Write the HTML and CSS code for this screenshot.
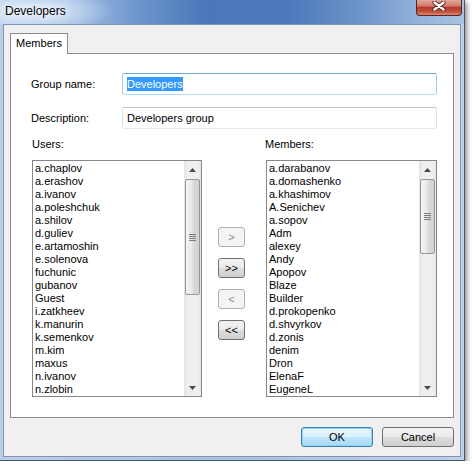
FILE: index.html
```html
<!DOCTYPE html>
<html lang="en">
<head>
    <meta charset="UTF-8">
    <title>Developers</title>
    <link rel="stylesheet" href="styles.css">
</head>
<body>
    <div class="window">
        <div class="titlebar">
            <span class="title">Developers</span>
            <div class="close">
                <svg width="14" height="10" viewBox="0 0 14 10">
                    <path d="M2.5 1.5 L11.5 8.5 M11.5 1.5 L2.5 8.5" stroke="#5a1f17" stroke-width="4.2" stroke-linecap="round"/>
                    <path d="M2.5 1.5 L11.5 8.5 M11.5 1.5 L2.5 8.5" stroke="#ffffff" stroke-width="2.4" stroke-linecap="round"/>
                </svg>
            </div>
        </div>
        <div class="client">
            <div class="tabs">
                <div class="tab">Members</div>
            </div>
            <div class="panel">
                <div class="field">
                    <span class="field-label">Group name:</span>
                    <div class="textbox focused"><span class="sel">Developers</span></div>
                </div>
                <div class="field">
                    <span class="field-label">Description:</span>
                    <div class="textbox">Developers group</div>
                </div>

                <div class="lists">
                    <div class="list-col users">
                        <div class="list-label">Users:</div>
                        <div class="listbox">
                            <div class="items">
                                <div>a.chaplov</div>
                                <div>a.erashov</div>
                                <div>a.ivanov</div>
                                <div>a.poleshchuk</div>
                                <div>a.shilov</div>
                                <div>d.guliev</div>
                                <div>e.artamoshin</div>
                                <div>e.solenova</div>
                                <div>fuchunic</div>
                                <div>gubanov</div>
                                <div>Guest</div>
                                <div>i.zatkheev</div>
                                <div>k.manurin</div>
                                <div>k.semenkov</div>
                                <div>m.kim</div>
                                <div>maxus</div>
                                <div>n.ivanov</div>
                                <div>n.zlobin</div>
                            </div>
                            <div class="scrollbar">
                                <div class="arrow">
                                    <svg width="7" height="4" viewBox="0 0 7 4"><path d="M3.5 0 L7 4 L0 4 Z" fill="#4a4a4a"/></svg>
                                </div>
                                <div class="track">
                                    <div class="thumb">
                                        <svg width="7" height="7" viewBox="0 0 7 7"><path d="M0 0.5 H7 M0 2.5 H7 M0 4.5 H7 M0 6.5 H7" stroke="#7d7d7d"/></svg>
                                    </div>
                                </div>
                                <div class="arrow">
                                    <svg width="7" height="4" viewBox="0 0 7 4"><path d="M0 0 L7 0 L3.5 4 Z" fill="#4a4a4a"/></svg>
                                </div>
                            </div>
                        </div>
                    </div>

                    <div class="move-buttons">
                        <button class="move" disabled>&gt;</button>
                        <button class="move">&gt;&gt;</button>
                        <button class="move" disabled>&lt;</button>
                        <button class="move">&lt;&lt;</button>
                    </div>

                    <div class="list-col members">
                        <div class="list-label">Members:</div>
                        <div class="listbox">
                            <div class="items">
                                <div>a.darabanov</div>
                                <div>a.domashenko</div>
                                <div>a.khashimov</div>
                                <div>A.Senichev</div>
                                <div>a.sopov</div>
                                <div>Adm</div>
                                <div>alexey</div>
                                <div>Andy</div>
                                <div>Apopov</div>
                                <div>Blaze</div>
                                <div>Builder</div>
                                <div>d.prokopenko</div>
                                <div>d.shvyrkov</div>
                                <div>d.zonis</div>
                                <div>denim</div>
                                <div>Dron</div>
                                <div>ElenaF</div>
                                <div>EugeneL</div>
                            </div>
                            <div class="scrollbar">
                                <div class="arrow">
                                    <svg width="7" height="4" viewBox="0 0 7 4"><path d="M3.5 0 L7 4 L0 4 Z" fill="#4a4a4a"/></svg>
                                </div>
                                <div class="track">
                                    <div class="thumb">
                                        <svg width="7" height="7" viewBox="0 0 7 7"><path d="M0 0.5 H7 M0 2.5 H7 M0 4.5 H7 M0 6.5 H7" stroke="#7d7d7d"/></svg>
                                    </div>
                                </div>
                                <div class="arrow">
                                    <svg width="7" height="4" viewBox="0 0 7 4"><path d="M0 0 L7 0 L3.5 4 Z" fill="#4a4a4a"/></svg>
                                </div>
                            </div>
                        </div>
                    </div>
                </div>
            </div>

            <div class="footer">
                <button class="btn default">OK</button>
                <button class="btn">Cancel</button>
            </div>
        </div>
    </div>
</body>
</html>
```

FILE: styles.css
```css
body {
    margin: 0;
    background: #fff;
    font-family: "Liberation Sans", Arial, sans-serif;
    font-size: 11px;
    color: #000;
}

/* window frame */
.window {
    width: 465px;
    box-sizing: border-box;
    background: linear-gradient(90deg, #b9cee8, #a9c2e2 50%, #bed2ea);
    border-right: 1px solid #45566f;
    border-bottom: 1px solid #45566f;
    box-shadow: 2px 2px 5px rgba(0, 0, 0, 0.45);
}

.titlebar {
    height: 24px;
    display: flex;
    justify-content: space-between;
    align-items: flex-start;
    padding-right: 2px;
    background:
        radial-gradient(ellipse 80px 20px at 34px 11px, rgba(235, 243, 252, 0.85), rgba(235, 243, 252, 0) 100%),
        linear-gradient(90deg, #bcd3ee 0, #a9c4e7 14%, #6d95cb 30%, #4b78b9 44%, #4c79ba 62%, #6e95ca 78%, #93b1da 90%, #a9c3e3 100%);
}

.title {
    padding-left: 5px;
    font-size: 12px;
    line-height: 22px;
    color: #000;
    text-shadow: 0 0 6px #fff, 0 0 10px #fff;
}

.close {
    width: 46px;
    height: 16px;
    box-sizing: border-box;
    padding-top: 1px;
    border: 1px solid #5e251d;
    border-top: none;
    border-radius: 0 0 4px 4px;
    background: linear-gradient(#e3a89d 0, #d17a6a 40%, #b73a2b 50%, #c0503d 78%, #d98c72 100%);
    display: flex;
    align-items: flex-start;
    justify-content: center;
}

.client {
    margin: 0 3px 3px;
    padding: 8px 6px 9px;
    background: #f0f0f0;
    border: 1px solid #8094b2;
}

/* tab control */
.tabs {
    display: flex;
}

.tab {
    position: relative;
    width: 58px;
    height: 21px;
    box-sizing: border-box;
    margin-bottom: -1px;
    border: 1px solid #898c95;
    border-bottom: none;
    background: #fff;
    text-align: center;
    line-height: 19px;
}

.panel {
    height: 365px;
    box-sizing: border-box;
    padding: 19px 16px 0 20px;
    border: 1px solid #898c95;
    background: #fff;
}

.field {
    display: flex;
    align-items: center;
    height: 22px;
}

.field + .field {
    margin-top: 12px;
}

.field-label {
    width: 91px;
}

.textbox {
    flex: 1;
    height: 22px;
    box-sizing: border-box;
    padding: 0 4px;
    border: 1px solid;
    border-color: #c4c6cb #dde1e7 #e3e9ef #dde1e7;
    border-radius: 2px;
    line-height: 20px;
}

.textbox.focused {
    border-color: #6ea6da #a4c9e3 #b7d9ed #a4c9e3;
}

.sel {
    display: inline-block;
    line-height: 14px;
    background: #3399ff;
    color: #fff;
}

/* user lists */
.lists {
    display: flex;
    margin-top: 9px;
    margin-left: 1px;
}

.users {
    width: 170px;
}

.members {
    width: 171px;
    margin-left: 21px;
}

.list-label {
    height: 13px;
    line-height: 13px;
    margin-bottom: 9px;
}

.members .list-label {
    margin-left: -1px;
}

.listbox {
    height: 237px;
    box-sizing: border-box;
    display: flex;
    border: 1px solid #828790;
}

.items {
    flex: 1;
    overflow: hidden;
    padding: 1px 0 0 2px;
}

.items div {
    line-height: 13px;
    white-space: nowrap;
}

.scrollbar {
    width: 17px;
    display: flex;
    flex-direction: column;
    background: linear-gradient(90deg, #e3e3e3, #eeeeee 20%, #f0f0f0 80%, #e6e6e6);
}

.arrow {
    height: 17px;
    display: flex;
    align-items: center;
    justify-content: center;
}

.track {
    flex: 1;
}

.thumb {
    margin: 1px 1px 0;
    box-sizing: border-box;
    border: 1px solid #979797;
    border-radius: 2px;
    background: linear-gradient(90deg, #f4f4f4, #e9e9e9 45%, #dadada 55%, #d2d2d2);
    display: flex;
    align-items: center;
    justify-content: center;
}

.users .thumb {
    height: 116px;
}

.members .thumb {
    height: 75px;
}

/* buttons */
.move-buttons {
    display: flex;
    flex-direction: column;
    gap: 11px;
    width: 27px;
    margin-left: 16px;
    padding-top: 89px;
}

.move,
.btn {
    height: 20px;
    box-sizing: border-box;
    padding: 0;
    border: 1px solid #707070;
    border-radius: 3px;
    background: linear-gradient(#f2f2f2 0, #ebebeb 50%, #dddddd 50%, #cfcfcf 100%);
    font-family: "Liberation Sans", Arial, sans-serif;
    font-size: 11px;
    color: #000;
}

.move:disabled {
    border-color: #adb2b5;
    background: #f4f4f4;
    color: #8c8c8c;
}

.footer {
    display: flex;
    justify-content: flex-end;
    gap: 9px;
    margin-top: 9px;
}

.btn {
    width: 72px;
}

.btn.default {
    border-color: #3c7fb1;
    background: linear-gradient(#eaf6fd 0, #d9f0fc 50%, #bee6fd 50%, #a7d9f5 100%);
    box-shadow: inset 0 0 0 1px #8fd2f5;
}
```
